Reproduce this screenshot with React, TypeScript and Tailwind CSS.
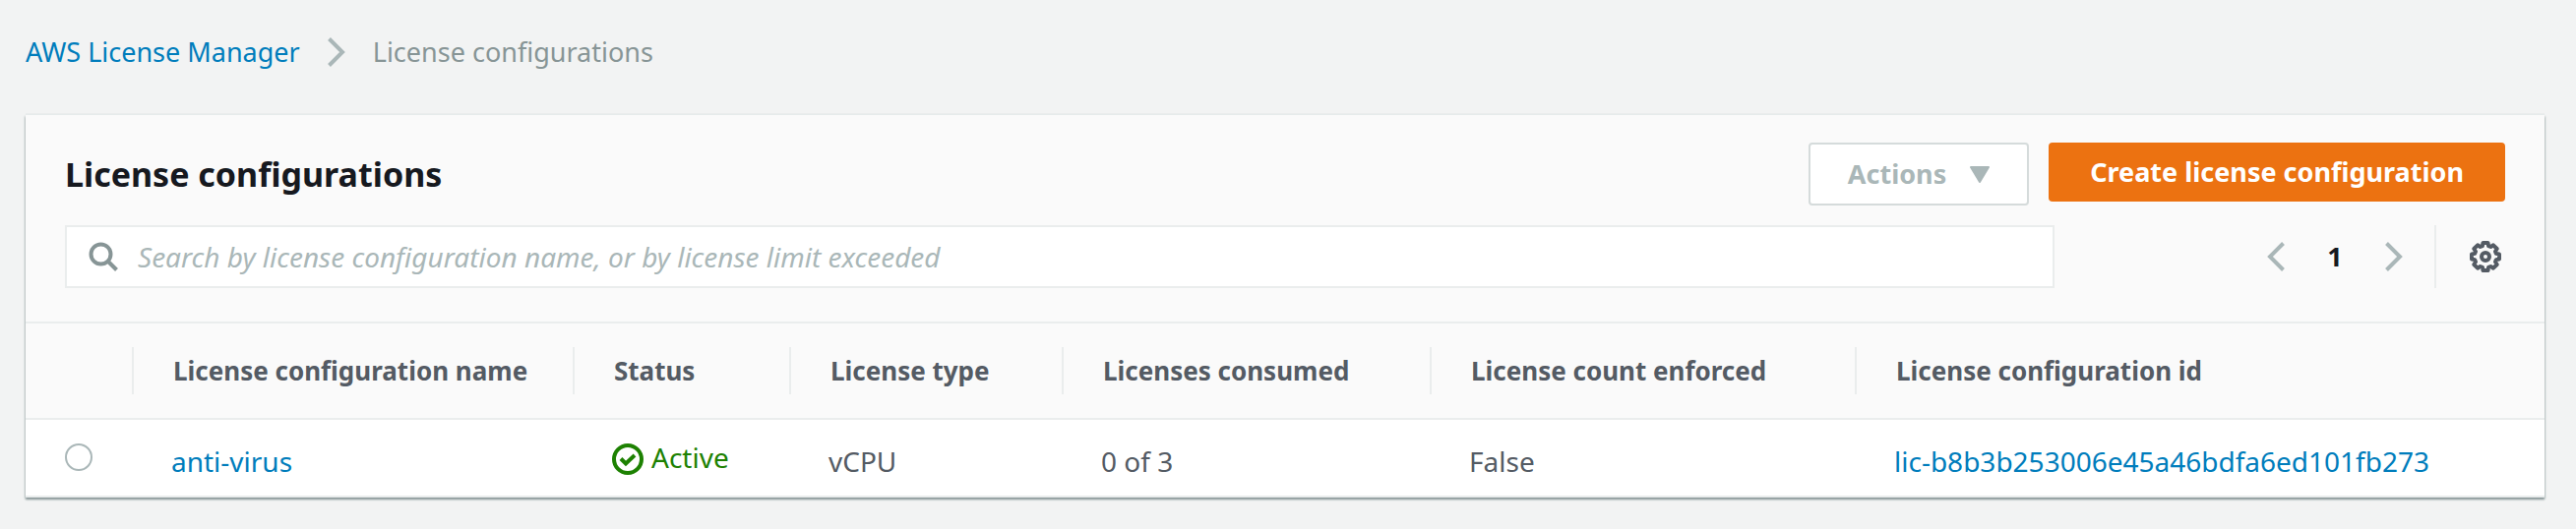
import React from "react";

const columns = [
  "License configuration name",
  "Status",
  "License type",
  "Licenses consumed",
  "License count enforced",
  "License configuration id",
];

function Chevron({ className, left = false }: { className: string; left?: boolean }) {
  return (
    <svg viewBox="0 0 18 30" className={className} fill="none" stroke="currentColor" strokeWidth="4" aria-hidden="true">
      <path d={left ? "M16.500 1.500 3 15l13.500 13.500" : "M1.500 1.500 15 15 1.500 28.500"} />
    </svg>
  );
}

function SearchIcon() {
  return (
    <svg viewBox="0 0 30 30" className="size-[30px] shrink-0 text-[#879596]" fill="none" stroke="currentColor" strokeWidth="4" aria-hidden="true">
      <circle cx="12.500" cy="12.500" r="10" />
      <path d="m19.500 19.500 9 9" />
    </svg>
  );
}

function GearIcon() {
  return (
    <svg viewBox="0 0 32 32" className="size-8" fill="none" stroke="currentColor" strokeWidth="4" strokeLinejoin="round" aria-hidden="true">
      <path d="M13.500 2h5l.6 3.100 2.200.9 2.700-1.700 3.700 3.700-1.700 2.700.9 2.200 3.100.6v5l-3.100.6-.9 2.200 1.700 2.700-3.700 3.700-2.700-1.700-2.200.9-.6 3.100h-5l-.6-3.100-2.200-.9L8 27.700 4.300 24 6 21.300l-.9-2.200-3.100-.6v-5l3.100-.6.9-2.200L4.300 8 8 4.300 10.700 6l2.200-.9z" />
      <circle cx="16" cy="16" r="4" />
    </svg>
  );
}

function CheckIcon() {
  return (
    <svg viewBox="0 0 32 32" className="mt-1.5 size-8" fill="none" stroke="currentColor" strokeWidth="4" aria-hidden="true">
      <circle cx="16" cy="16" r="14" />
      <path d="m9 15.500 5 5 9-8.500" />
    </svg>
  );
}

export default function App() {
  return (
    <div className="min-h-screen bg-[#f2f3f3] pl-[26px] pr-8 font-['Noto_Sans',sans-serif] text-[28px] leading-10 text-[#545b64]">
      <nav aria-label="Breadcrumb" className="pb-11 pt-[33px]">
        <ol className="flex items-center text-[27px]">
          <li><a href="#" className="text-[#007dbc]">AWS License Manager</a></li>
          <li className="flex items-center text-[#879596]">
            <Chevron className="mx-7 h-[30px] w-[18px] text-[#aab7b8]" />
            License configurations
          </li>
        </ol>
      </nav>

      <main className="border-b-2 border-[#eaeded] bg-white shadow-[0_2px_2px_0_#879596,1px_1px_2px_0_#d5dbdb,-1px_1px_2px_0_#d5dbdb,0_-2px_0_0_#eaeded]">
        <header className="bg-[#fafafa] pb-[34px] pl-10 pr-10 pt-7">
          <div className="flex items-start gap-5">
            <h1 className="grow pt-2 text-[34px] leading-[48px] font-bold text-[#16191f]">License configurations</h1>
            <button type="button" disabled className="flex h-16 items-center gap-6 rounded-sm border-2 border-[#d5dbdb] bg-white px-[38px] text-[27px] font-bold text-[#aab7b8]">
              Actions
              <svg viewBox="0 0 20 17" className="h-[17px] w-5" fill="currentColor" stroke="currentColor" strokeWidth="2" strokeLinejoin="round" aria-hidden="true">
                <path d="M1 1h18l-9 15z" />
              </svg>
            </button>
            <button type="button" className="h-[60px] rounded-sm bg-[#ec7211] px-[42px] text-[27px] font-bold text-white">
              Create license configuration
            </button>
          </div>
          <div className="mt-5 flex items-center">
            <label className="flex h-16 max-w-[2022px] grow items-center gap-5 border-2 border-[#eaeded] bg-white px-[22px]">
              <SearchIcon />
              <input
                type="search"
                aria-label="Search license configurations"
                placeholder="Search by license configuration name, or by license limit exceeded"
                className="min-w-0 grow bg-transparent outline-none placeholder:text-[#aab7b8] placeholder:italic"
              />
            </label>
            <div className="ml-auto flex items-center">
              <button type="button" aria-label="Previous page" className="text-[#aab7b8]"><Chevron left className="h-[30px] w-[18px]" /></button>
              <button type="button" className="w-[102px] text-center text-[27px] font-bold text-[#16191f]">1</button>
              <button type="button" aria-label="Next page" className="text-[#aab7b8]"><Chevron className="h-[30px] w-[18px]" /></button>
              <div className="ml-8 flex h-16 items-center border-l-2 border-[#eaeded] pl-[34px] pr-1">
                <button type="button" aria-label="Preferences"><GearIcon /></button>
              </div>
            </div>
          </div>
        </header>

        <table className="w-full table-fixed border-collapse text-left">
          <colgroup>
            <col className="w-[108px]" />
            <col className="w-[448px]" />
            <col className="w-[220px]" />
            <col className="w-[277px]" />
            <col className="w-[374px]" />
            <col className="w-[432px]" />
            <col />
          </colgroup>
          <thead className="border-y-2 border-[#eaeded] bg-[#fafafa]">
            <tr>
              <td />
              {columns.map((name) => (
                <th key={name} scope="col" className="px-0 py-6 text-[26px] font-bold">
                  <div className="h-12 border-l-2 border-[#eaeded] pl-10 leading-[48px] whitespace-nowrap">{name}</div>
                </th>
              ))}
            </tr>
          </thead>
          <tbody>
            <tr className="h-[78px] align-top">
              <td className="pl-10 pt-6">
                <input type="radio" name="license" aria-label="Select anti-virus" className="block size-7 appearance-none rounded-full border-2 border-[#aab7b8] bg-white" />
              </td>
              <td className="pl-10 pt-[22px]"><a href="#" className="text-[#007dbc]">anti-virus</a></td>
              <td className="pl-10 pt-[18px]">
                <span className="flex items-start gap-2 text-[#1d8102]"><CheckIcon />Active</span>
              </td>
              <td className="pl-10 pt-[22px]">vCPU</td>
              <td className="pl-10 pt-[22px]">0 of 3</td>
              <td className="pl-10 pt-[22px]">False</td>
              <td className="pl-10 pt-[22px] whitespace-nowrap"><a href="#" className="text-[#007dbc]">lic-b8b3b253006e45a46bdfa6ed101fb273</a></td>
            </tr>
          </tbody>
        </table>
      </main>
    </div>
  );
}
